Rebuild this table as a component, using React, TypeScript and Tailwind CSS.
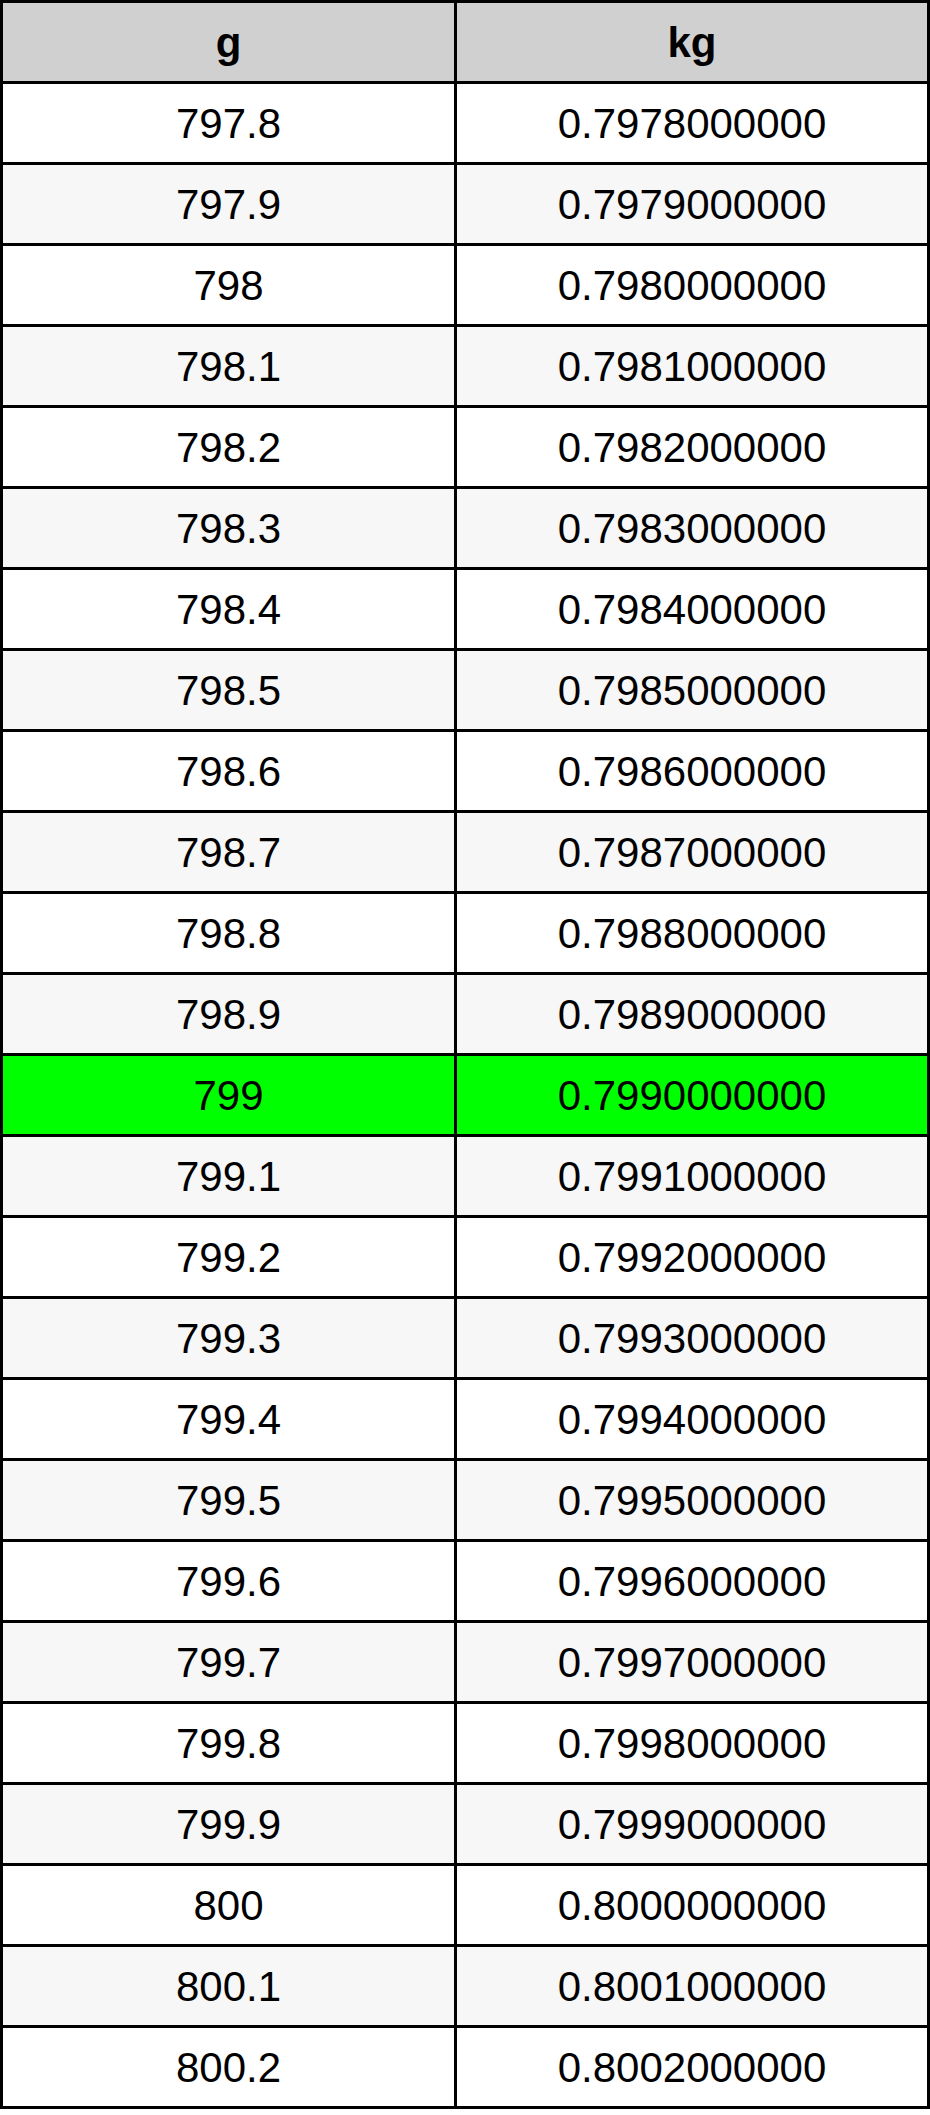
const rows = Array.from({ length: 25 }, (_, i) => {
  const tenths = 7978 + i;
  return {
    grams: tenths % 10 === 0 ? String(tenths / 10) : (tenths / 10).toFixed(1),
    kilograms: (tenths / 10000).toFixed(10),
    active: tenths === 7990,
  };
});

function rowBg(index: number, active: boolean) {
  if (active) return "bg-[#00ff00]";
  return index % 2 === 0 ? "bg-white" : "bg-[#f7f7f7]";
}

export default function App() {
  return (
    <div className="w-[930px] bg-white font-['Liberation_Sans',Arial,sans-serif] text-black">
      <div className="grid grid-cols-[451px_470px] gap-[3px] bg-black p-[3px]">
        <div className="flex h-[78px] items-center justify-center bg-[#d0d0d0] text-[42px] font-bold">g</div>
        <div className="flex h-[78px] items-center justify-center bg-[#d0d0d0] text-[42px] font-bold">kg</div>

        {rows.map((row, index) => (
          <div key={row.grams} className="contents">
            <div className={`flex h-[78px] items-center justify-center text-[42px] ${rowBg(index, row.active)}`}>
              {row.grams}
            </div>
            <div className={`flex h-[78px] items-center justify-center text-[42px] ${rowBg(index, row.active)}`}>
              {row.kilograms}
            </div>
          </div>
        ))}
      </div>
    </div>
  );
}
